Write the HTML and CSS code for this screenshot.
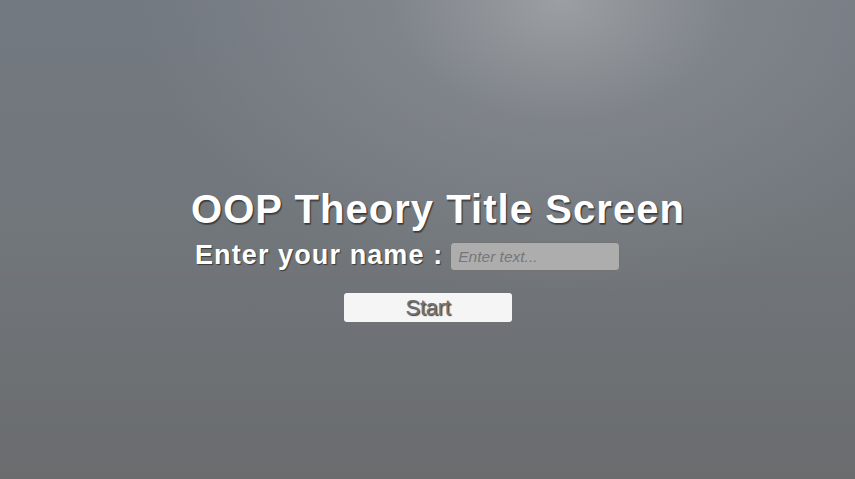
FILE: index.html
```html
<!DOCTYPE html>
<html>
<head>
<meta charset="utf-8">
<link rel="stylesheet" href="styles.css">
</head>
<body>
<div class="screen">
  <div class="panel">
    <h1 class="title">OOP Theory Title Screen</h1>
    <div class="name-row">
      <span class="label">Enter your name :</span>
      <div class="input"><span class="placeholder">Enter text...</span></div>
    </div>
    <button class="start">Start</button>
  </div>
</div>
</body>
</html>
```
FILE: styles.css
```css
html, body {
  margin: 0;
  padding: 0;
  width: 855px;
  height: 479px;
  overflow: hidden;
}
.screen {
  width: 855px;
  height: 479px;
  background:
    radial-gradient(ellipse 420px 300px at 560px 0px, rgba(160,163,167,0.9) 0%, rgba(140,144,150,0.5) 40%, rgba(120,125,131,0) 100%),
    linear-gradient(180deg, #737980 0%, #71767b 50%, #6a6c6e 100%);
  font-family: "Liberation Sans", Arial, sans-serif;
  display: flex;
}
.panel {
  display: flex;
  flex-direction: column;
  align-items: flex-start;
  padding-top: 186px;
  padding-left: 191px;
}
.title {
  margin: 0;
  font-size: 40px;
  font-weight: bold;
  letter-spacing: 1.05px;
  color: #ffffff;
  line-height: 46px;
  text-shadow: 1px 1px 1px #3a3a3a, 1px 2px 1px rgba(0,0,0,0.35);
}
.name-row {
  display: flex;
  align-items: center;
  margin-top: 9px;
  margin-left: 4px;
}
.label {
  color: #fff;
  font-size: 27px;
  font-weight: bold;
  letter-spacing: 1.1px;
  text-shadow: 1px 1px 1px #3a3a3a;
  margin-right: 7px;
  position: relative;
  top: -1px;
}
.input {
  width: 170px;
  height: 29px;
  box-sizing: border-box;
  background: #adadad;
  border: 1px solid #747474;
  border-radius: 4px;
  display: flex;
  align-items: center;
  padding-left: 7px;
}
.placeholder {
  font-style: italic;
  font-size: 15.5px;
  color: #777777;
}
.start {
  margin-top: 21px;
  margin-left: 153px;
  width: 168px;
  height: 29px;
  background: #f5f5f5;
  border: none;
  border-radius: 3px;
  font-family: "Liberation Sans", Arial, sans-serif;
  font-size: 22px;
  letter-spacing: -0.3px;
  color: #727272;
  text-shadow: 1px 1px 1px #3a3a3a;
  padding: 0;
}
```
